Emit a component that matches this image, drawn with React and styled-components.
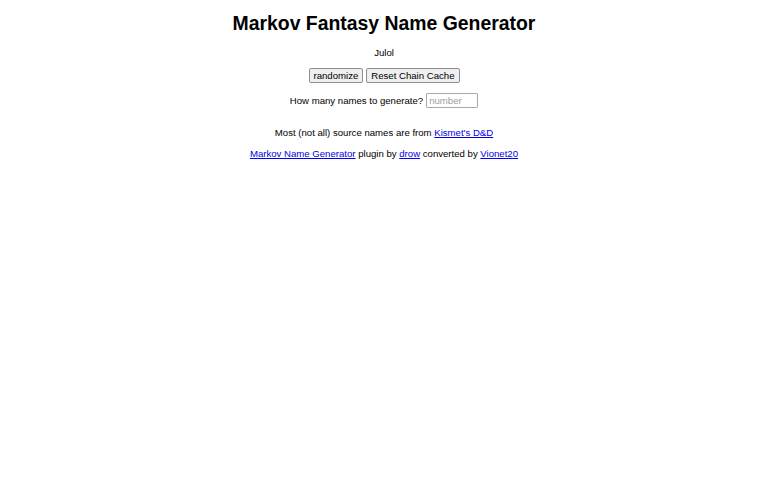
import React, { useState } from "react";
import styled, { createGlobalStyle } from "styled-components";

const GlobalStyle = createGlobalStyle`
  body {
    margin: 0;
    background: #ffffff;
    font-family: "Liberation Sans", Arial, sans-serif;
    color: #000000;
  }
`;

const Page = styled.div`
  display: flex;
  flex-direction: column;
  align-items: center;
  padding-top: 12px;
  font-size: 9.6px;
`;

const Title = styled.h1`
  margin: 0;
  font-size: 19.4px;
  line-height: 22px;
  font-weight: bold;
`;

const Result = styled.div`
  margin-top: 13px;
  line-height: 12px;
`;

const Row = styled.div`
  display: flex;
  align-items: center;
  gap: ${(p) => p.gap || 3}px;
  margin-top: ${(p) => p.top || 0}px;
  line-height: 12px;
`;

const Button = styled.button`
  font-family: "Liberation Sans", Arial, sans-serif;
  font-size: 9.6px;
  height: 15px;
  padding: 0 4px;
  line-height: 12px;
  color: #000;
  background: #efefef;
  border: 1px solid #8f8f8f;
  border-radius: 2px;
`;

const NumberInput = styled.input`
  font-family: "Liberation Sans", Arial, sans-serif;
  font-size: 9.6px;
  width: 46px;
  height: 11px;
  padding: 1px 2px;
  border: 1px solid #a9a9a9;
  border-radius: 1px;
  color: #000;
  &::placeholder {
    color: #a0a0a0;
  }
`;

const Note = styled.p`
  margin: ${(p) => p.top || 0}px 0 0;
  line-height: 12px;
`;

const Link = styled.a`
  color: #0000ee;
  text-decoration: underline;
`;

export default function App() {
  const [count, setCount] = useState("");
  return (
    <>
      <GlobalStyle />
      <Page>
        <Title>Markov Fantasy Name Generator</Title>
        <Result>Julol</Result>
        <Row top={9} gap={3}>
          <Button>randomize</Button>
          <Button>Reset Chain Cache</Button>
        </Row>
        <Row top={10} gap={3}>
          <span>How many names to generate?</span>
          <NumberInput
            type="text"
            placeholder="number"
            value={count}
            onChange={(e) => setCount(e.target.value)}
          />
        </Row>
        <Note top={19}>
          Most (not all) source names are from <Link href="#">Kismet's D&amp;D</Link>
        </Note>
        <Note top={9}>
          <Link href="#">Markov Name Generator</Link> plugin by{" "}
          <Link href="#">drow</Link> converted by <Link href="#">Vionet20</Link>
        </Note>
      </Page>
    </>
  );
}
